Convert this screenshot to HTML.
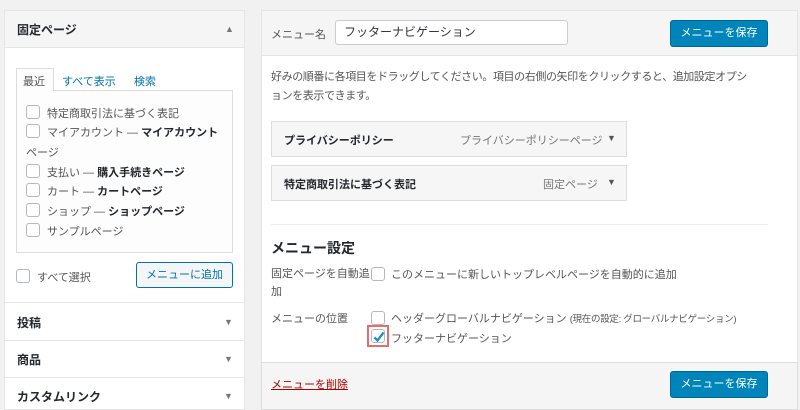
<!DOCTYPE html>
<html><head><meta charset="utf-8"><style>
*{box-sizing:border-box;margin:0;padding:0}
body{width:800px;height:408px;background:#f1f1f1;font-family:"Liberation Sans","Noto Sans CJK JP",sans-serif;font-size:11px;color:#555;position:relative;overflow:hidden}
.a{position:absolute;white-space:nowrap}
.cb{position:absolute;width:14px;height:14px;border:1px solid #b4b9be;border-radius:3px;background:#fff}
.btn{position:absolute;background:#0085ba;color:#fff;border:1px solid #006799;border-radius:3px;text-align:center;line-height:25px;font-size:11px}
.arr{position:absolute;font-size:9px;color:#72777c}
b{color:#23282d}
</style></head><body>
<!-- left panel -->
<div class="a" style="left:4px;top:10px;width:241px;height:400px;background:#fff;border:1px solid #e5e5e5"></div>
<div class="a" style="left:4px;top:10px;width:241px;height:38px;background:#f5f5f5;border:1px solid #e5e5e5"></div>
<div class="a" style="left:17px;top:21px;font-weight:bold;color:#23282d;font-size:12px">固定ページ</div>
<div class="arr" style="left:225px;top:24px">▲</div>
<div class="a" style="left:16px;top:90px;width:217px;height:163px;background:#fdfdfd;border:1px solid #ddd"></div>
<div class="a" style="left:16px;top:68px;width:38px;height:23px;background:#fdfdfd;border:1px solid #ddd;border-bottom:none"></div>
<div class="a" style="left:23px;top:73px">最近</div>
<div class="a" style="left:62px;top:73px;color:#0073aa">すべて表示</div>
<div class="a" style="left:134px;top:73px;color:#0073aa">検索</div>
<div class="cb" style="left:26px;top:105px"></div><div class="a" style="left:47px;top:105px">特定商取引法に基づく表記</div>
<div class="cb" style="left:26px;top:124px"></div><div class="a" style="left:47px;top:124px">マイアカウント — <b>マイアカウント</b></div>
<div class="a" style="left:26px;top:144px">ページ</div>
<div class="cb" style="left:26px;top:164px"></div><div class="a" style="left:47px;top:164px">支払い — <b>購入手続きページ</b></div>
<div class="cb" style="left:26px;top:183px"></div><div class="a" style="left:47px;top:183px">カート — <b>カートページ</b></div>
<div class="cb" style="left:26px;top:203px"></div><div class="a" style="left:47px;top:203px">ショップ — <b>ショップページ</b></div>
<div class="cb" style="left:26px;top:223px"></div><div class="a" style="left:47px;top:223px">サンプルページ</div>
<div class="cb" style="left:16px;top:269px"></div><div class="a" style="left:37px;top:269px">すべて選択</div>
<div class="a" style="left:136px;top:262px;width:97px;height:26px;border:1px solid #0073aa;border-radius:3px;background:#f3f5f6;color:#0073aa;text-align:center;line-height:24px">メニューに追加</div>
<div class="a" style="left:4px;top:302px;width:241px;border-top:1px solid #e5e5e5"></div>
<div class="a" style="left:4px;top:340px;width:241px;border-top:1px solid #e5e5e5"></div>
<div class="a" style="left:4px;top:377px;width:241px;border-top:1px solid #e5e5e5"></div>
<div class="a" style="left:17px;top:314px;font-weight:bold;color:#23282d;font-size:12px">投稿</div><div class="arr" style="left:224px;top:317px">▼</div>
<div class="a" style="left:17px;top:351px;font-weight:bold;color:#23282d;font-size:12px">商品</div><div class="arr" style="left:224px;top:354px">▼</div>
<div class="a" style="left:17px;top:388px;font-weight:bold;color:#23282d;font-size:12px">カスタムリンク</div><div class="arr" style="left:224px;top:391px">▼</div>
<!-- right panel -->
<div class="a" style="left:261px;top:10px;width:537px;height:400px;background:#fff;border:1px solid #e5e5e5"></div>
<div class="a" style="left:261px;top:10px;width:537px;height:46px;background:#f5f5f5;border:1px solid #e5e5e5"></div>
<div class="a" style="left:271px;top:26px">メニュー名</div>
<div class="a" style="left:335px;top:20px;width:233px;height:25px;background:#fff;border:1px solid #ccc;border-radius:3px;padding-left:8px;line-height:23px;font-size:12px;color:#32373c">フッターナビゲーション</div>
<div class="btn" style="left:670px;top:20px;width:98px;height:27px">メニューを保存</div>
<div class="a" style="left:271px;top:68px;line-height:19px;letter-spacing:-0.4px">好みの順番に各項目をドラッグしてください。項目の右側の矢印をクリックすると、追加設定オプシ<br>ョンを表示できます。</div>
<div class="a" style="left:271px;top:121px;width:356px;height:36px;background:#f6f6f6;border:1px solid #ddd"></div>
<div class="a" style="left:284px;top:132px;font-weight:bold;color:#23282d">プライバシーポリシー</div>
<div class="a" style="left:460px;top:132px;color:#777">プライバシーポリシーページ</div><div class="arr" style="left:607px;top:133px;color:#555">▼</div>
<div class="a" style="left:271px;top:165px;width:356px;height:36px;background:#f6f6f6;border:1px solid #ddd"></div>
<div class="a" style="left:284px;top:176px;font-weight:bold;color:#23282d">特定商取引法に基づく表記</div>
<div class="a" style="left:543px;top:176px;color:#777">固定ページ</div><div class="arr" style="left:607px;top:177px;color:#555">▼</div>
<div class="a" style="left:271px;top:224px;width:497px;border-top:1px solid #eee"></div>
<div class="a" style="left:271px;top:238px;font-weight:bold;color:#23282d;font-size:14px">メニュー設定</div>
<div class="a" style="left:271px;top:265px;line-height:18px">固定ページを自動追<br>加</div>
<div class="cb" style="left:371px;top:267px"></div><div class="a" style="left:391px;top:266px">このメニューに新しいトップレベルページを自動的に追加</div>
<div class="a" style="left:271px;top:310px">メニューの位置</div>
<div class="cb" style="left:371px;top:311px"></div><div class="a" style="left:391px;top:310px">ヘッダーグローバルナビゲーション <span style="font-size:9.5px;letter-spacing:-0.3px">(現在の設定: グローバルナビゲーション)</span></div>
<div class="a" style="left:367px;top:325px;width:22px;height:22px;border:2px solid #e86c6c"></div>
<div class="cb" style="left:371px;top:329px"></div>
<svg class="a" style="left:371px;top:329px" width="16" height="16" viewBox="0 0 16 16"><path d="M3.5 8.5 L6.5 11.5 L12.5 3.5" stroke="#1e8cbe" stroke-width="2.3" fill="none"/></svg>
<div class="a" style="left:391px;top:330px">フッターナビゲーション</div>
<div class="a" style="left:261px;top:362px;width:537px;height:48px;background:#f5f5f5;border:1px solid #ddd"></div>
<div class="a" style="left:271px;top:376px;color:#a00;text-decoration:underline">メニューを削除</div>
<div class="btn" style="left:670px;top:371px;width:98px;height:27px">メニューを保存</div>
</body></html>
